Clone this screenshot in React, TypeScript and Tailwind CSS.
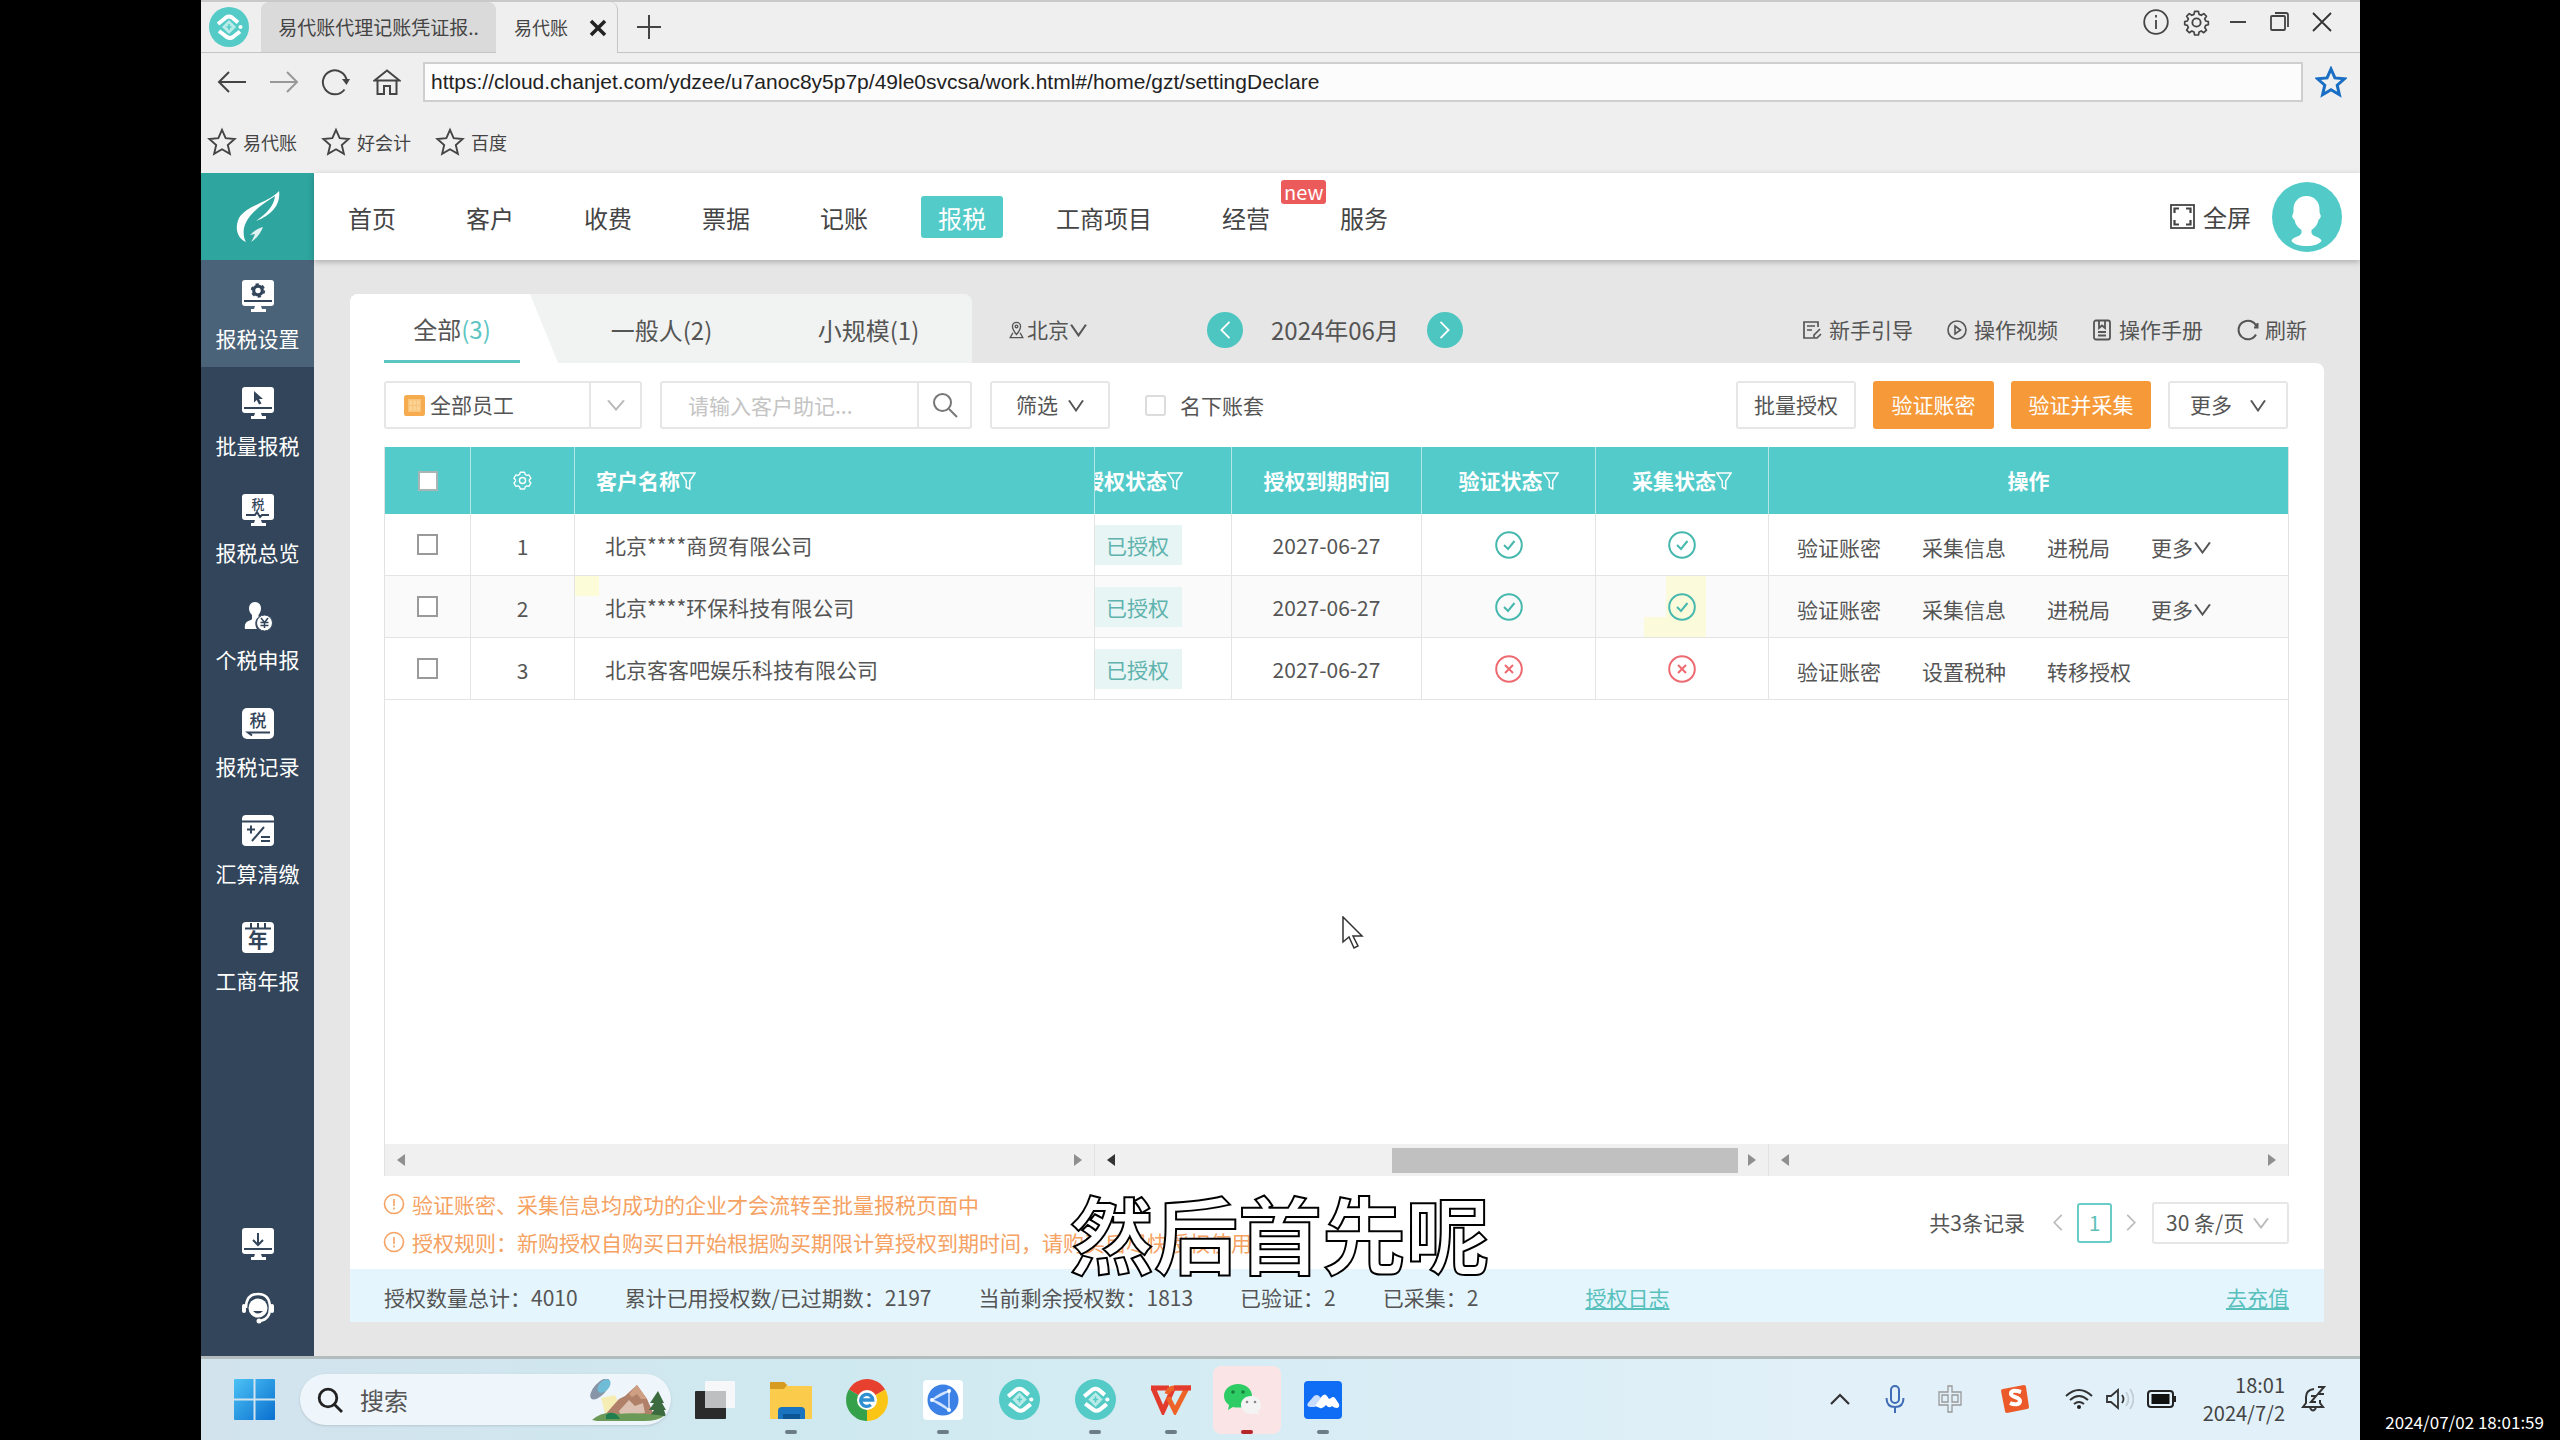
import React from "react";

type P = { className?: string };

const Chevron = ({ className = "" }: P) => (
  <svg viewBox="0 0 16 18" className={className} fill="none" stroke="currentColor" strokeWidth="2" preserveAspectRatio="none">
    <path d="M1 2l7 14 7-14" />
  </svg>
);
const Funnel = () => (
  <svg viewBox="0 0 18 22" className="h-5 w-4" fill="none" stroke="#fff" strokeWidth="1.6">
    <path d="M1 2h16l-6 9v9l-4-2v-7z" />
  </svg>
);
const Star = ({ className = "", w = 2 }: P & { w?: number }) => (
  <svg viewBox="0 0 32 32" className={className} fill="none" stroke="currentColor" strokeWidth={w}>
    <path d="M16 3l3.9 8.9 9.6.9-7.3 6.4 2.2 9.500L16 23.700l-8.400 5 2.200-9.500-7.300-6.400 9.600-.9z" />
  </svg>
);
const Gear = ({ className = "" }: P) => (
  <svg viewBox="0 0 26 26" className={className} fill="none" stroke="currentColor" strokeWidth="1.800" strokeLinejoin="round">
    <path d="M11 1.500h4l.7 3.200 2.300 1 2.700-1.800 2.800 2.800-1.800 2.700 1 2.300 2.800.6v3.400l-2.800.7-1 2.200 1.800 2.800-2.800 2.700-2.700-1.800-2.300 1-.7 3.200h-4l-.7-3.200-2.300-1-2.700 1.800-2.800-2.700 1.800-2.800-1-2.200L.5 15.700v-3.400l2.800-.6 1-2.300-1.800-2.700 2.800-2.800L8 5.700l2.300-1z" transform="translate(1.200 .9) scale(.91)" />
    <circle cx="13" cy="13" r="4" />
  </svg>
);
const HexGear = ({ className = "" }: P) => (
  <svg viewBox="0 0 22 22" className={className} fill="none" stroke="currentColor" strokeWidth="1.500" strokeLinejoin="round">
    <path d="M8.500 1.500h5l.8 2.600 1.700 1 2.600-.6 2.300 4-1.900 2v1.500l1.900 2-2.300 4-2.600-.6-1.700 1-.8 2.600h-5l-.8-2.600-1.700-1-2.600.6-2.300-4 1.900-2v-1.500l-1.900-2 2.300-4 2.600.6 1.700-1z" transform="translate(1 1) scale(.9)" />
    <circle cx="11" cy="11" r="3.200" />
  </svg>
);
const BrandDisc = ({ className = "" }: P) => (
  <svg viewBox="0 0 40 40" className={className}>
    <circle cx="20" cy="20" r="20" fill="#54cbc6" />
    <g fill="none" stroke="#fff" strokeWidth="4">
      <path d="M9 17l8-6.500q3-2 6 0l6 5" />
      <path d="M10 24l8 6q3 2 6 0l7-5.500" />
    </g>
    <path d="M20 13l7 7-7 7-7-7z" fill="#b9ece9" />
    <path d="M20 17v6M17.500 20h5" stroke="#54cbc6" strokeWidth="1.500" />
    <circle cx="31.500" cy="20" r="2" fill="#fff" />
  </svg>
);

const Monitor = ({ children }: { children?: React.ReactNode }) => (
  <svg viewBox="0 0 32 32" className="h-8 w-8">
    <rect x="0" y="0" width="32" height="26" rx="3" fill="#fff" />
    <path d="M13 26h6l1 3h4v3H9v-3h3z" fill="#fff" />
    {children}
  </svg>
);
const D = "#33455a";
const sideItems: { label: string; icon: React.ReactNode }[] = [
  {
    label: "报税设置",
    icon: (
      <Monitor>
        <path d="M2 21h28" stroke={D} strokeWidth="2" />
        <circle cx="16" cy="10.500" r="4.300" fill="none" stroke={D} strokeWidth="3.200" />
        <circle cx="16" cy="10.500" r="6.300" fill="none" stroke={D} strokeWidth="1.800" strokeDasharray="3.300 3.300" />
      </Monitor>
    ),
  },
  {
    label: "批量报税",
    icon: (
      <Monitor>
        <path d="M2 21h28" stroke={D} strokeWidth="2" />
        <path d="M12 4l9 8h-4l2.500 4.500-2.500 1-2.200-4.500-2.800 2.500z" fill={D} />
      </Monitor>
    ),
  },
  {
    label: "报税总览",
    icon: (
      <Monitor>
        <text x="16" y="15" fontSize="13" fontWeight="500" textAnchor="middle" fill={D}>税</text>
        <path d="M4 21h9l2-3 3 5 2-2h7" stroke={D} strokeWidth="2" fill="none" />
      </Monitor>
    ),
  },
  {
    label: "个税申报",
    icon: (
      <svg viewBox="0 0 32 32" className="h-8 w-8">
        <path d="M13 1c4 0 6 3 6 6.500 0 3-1.500 5-2.500 6.500v2c-4 3-4 8-1.500 12H3c-1-5 1-8 6-9l1-1v-4C8 12 7 10 7 7.500 7 4 9 1 13 1z" fill="#fff" />
        <circle cx="22.500" cy="22" r="8" fill="#fff" stroke={D} strokeWidth="1" />
        <path d="M19 17l3.500 4.500L26 17M22.500 21v6M18.500 21.500h8M18.500 24.500h8" stroke={D} strokeWidth="1.500" fill="none" />
      </svg>
    ),
  },
  {
    label: "报税记录",
    icon: (
      <svg viewBox="0 0 32 32" className="h-8 w-8">
        <rect width="32" height="31" rx="5" fill="#fff" />
        <text x="16" y="19" fontSize="17" fontWeight="500" textAnchor="middle" fill={D}>税</text>
        <path d="M28 24.500H6l4 3" stroke={D} strokeWidth="2" fill="none" />
      </svg>
    ),
  },
  {
    label: "汇算清缴",
    icon: (
      <svg viewBox="0 0 32 32" className="h-8 w-8">
        <rect width="32" height="31" rx="4" fill="#fff" />
        <path d="M0 6.500h32M5 14.500h8M9 10.500v8M10 26L22 12M19 22h9M19 26h9" stroke={D} strokeWidth="2" fill="none" />
      </svg>
    ),
  },
  {
    label: "工商年报",
    icon: (
      <svg viewBox="0 0 32 32" className="h-8 w-8">
        <rect width="32" height="31" rx="4" fill="#fff" />
        <path d="M3 6.500h26M9 1v5M16 1v5M23 1v5" stroke={D} strokeWidth="2" />
        <text x="16" y="26" fontSize="20" fontWeight="700" textAnchor="middle" fill={D}>年</text>
      </svg>
    ),
  },
];

const navItems = ["首页", "客户", "收费", "票据", "记账", "报税", "工商项目", "经营", "服务"];

const rows = [
  { name: "北京****商贸有限公司", ok: true, ops: ["验证账密", "采集信息", "进税局"], more: true },
  { name: "北京****环保科技有限公司", ok: true, ops: ["验证账密", "采集信息", "进税局"], more: true },
  { name: "北京客客吧娱乐科技有限公司", ok: false, ops: ["验证账密", "设置税种", "转移授权"], more: false },
];

const Status = ({ ok }: { ok: boolean }) => (
  <svg viewBox="0 0 28 28" className="relative mx-auto block h-7 w-7" fill="none" strokeWidth="2" stroke={ok ? "#46b8ad" : "#ee6a70"}>
    <circle cx="14" cy="14" r="12.800" />
    {ok ? <path d="M9 14l4 4 6.500-8" /> : <path d="M10 10l8 8M18 10l-8 8" />}
  </svg>
);
const Arrow = ({ left, dark }: { left?: boolean; dark?: boolean }) => (
  <svg viewBox="0 0 8 12" className="h-3 w-2">
    <path d={left ? "M8 0v12L0 6z" : "M0 0v12l8-6z"} fill={dark ? "#333" : "#8f8f8f"} />
  </svg>
);
const Notice = ({ children }: { children: React.ReactNode }) => (
  <p className="flex items-center gap-[7px] whitespace-nowrap leading-[38px] text-[#f5a263]">
    <svg viewBox="0 0 22 22" className="h-[22px] w-[22px]" fill="none" stroke="currentColor" strokeWidth="1.600">
      <circle cx="11" cy="11" r="9.500" />
      <path d="M11 6v7M11 14.500v2" />
    </svg>
    {children}
  </p>
);
const box = "flex h-12 items-center justify-center rounded-[3px] whitespace-nowrap";
const check = "block appearance-none bg-white";

function TaskSlot({ children, dot, active }: { children: React.ReactNode; dot?: boolean; active?: boolean }) {
  return (
    <button className={"relative flex h-[68px] w-[68px] items-center justify-center rounded-lg " + (active ? "bg-[#fbe4e6]" : "")}>
      {children}
      {dot && <span className={"absolute bottom-0 left-7 h-1 w-3 rounded-full " + (active ? "bg-[#b5262b]" : "bg-[#6c7d87]")} />}
    </button>
  );
}

function Browser() {
  return (
    <header className="bg-[#efefef] text-[#444]">
      <div className="flex h-[53px] items-stretch border-t-2 border-[#c9c9c9]">
        <div className="flex w-[60px] items-center border-b border-[#c4c4c4] pl-2">
          <BrandDisc className="h-10 w-10" />
        </div>
        <button className="w-[235px] rounded-t-lg border-b border-[#c4c4c4] bg-[#dadada] text-center text-[19px] whitespace-nowrap">易代账代理记账凭证报..</button>
        <div className="flex w-[122px] items-center justify-between rounded-t-lg border-r border-[#c4c4c4] pr-[10px] pl-[18px] text-[18px]">
          <button>易代账</button>
          <button aria-label="关闭标签">
            <svg viewBox="0 0 18 18" className="h-[18px] w-[18px]" stroke="#222" strokeWidth="3.500"><path d="M2 2l14 14M16 2L2 16" /></svg>
          </button>
        </div>
        <div className="flex flex-1 items-center justify-between border-b border-[#c4c4c4] pr-7 pl-[18px]">
          <button aria-label="新标签">
            <svg viewBox="0 0 26 26" className="h-[26px] w-[26px]" stroke="#444" strokeWidth="2"><path d="M13 1v24M1 13h24" /></svg>
          </button>
          <div className="flex items-center pb-[10px]">
            <button aria-label="信息" className="mr-[14px]">
              <svg viewBox="0 0 26 26" className="h-[26px] w-[26px]" fill="none" stroke="#444" strokeWidth="1.800"><circle cx="13" cy="13" r="11.800" /><path d="M13 11v9M13 6v2.500" /></svg>
            </button>
            <button aria-label="设置" className="mr-5"><Gear className="h-[27px] w-[27px]" /></button>
            <button aria-label="最小化" className="mr-6"><span className="block h-[2px] w-4 bg-[#444]" /></button>
            <button aria-label="还原" className="mr-[22px]">
              <svg viewBox="0 0 20 20" className="h-5 w-5" fill="none" stroke="#444" strokeWidth="1.800"><rect x="1" y="4" width="14" height="14" rx="1" /><path d="M5 1h11q2 0 2 2v12" /></svg>
            </button>
            <button aria-label="关闭">
              <svg viewBox="0 0 20 20" className="h-5 w-5" stroke="#333" strokeWidth="1.800"><path d="M1 1l18 18M19 1L1 19" /></svg>
            </button>
          </div>
        </div>
      </div>
      <div className="flex h-[58px] items-center pr-[13px] pl-4">
        <button aria-label="后退" className="mr-[22px]">
          <svg viewBox="0 0 30 22" className="h-[22px] w-[30px]" fill="none" stroke="#444" strokeWidth="2"><path d="M29 11H2M12 1L2 11l10 10" /></svg>
        </button>
        <button aria-label="前进" className="mr-[22px]">
          <svg viewBox="0 0 30 22" className="h-[22px] w-[30px]" fill="none" stroke="#999" strokeWidth="2"><path d="M1 11h27M18 1l10 10-10 10" /></svg>
        </button>
        <button aria-label="重新加载" className="mr-[22px]">
          <svg viewBox="0 0 30 28" className="h-[28px] w-[30px]" fill="none" stroke="#444" strokeWidth="2"><path d="M23.500 21.500A12 12 0 1 1 25.800 13" /><path d="M21 11h8l-3.500 6z" fill="#444" stroke="none" /></svg>
        </button>
        <button aria-label="主页" className="mr-[22px]">
          <svg viewBox="0 0 28 28" className="h-7 w-7" fill="none" stroke="#444" strokeWidth="2"><path d="M1.500 12.500L14 2.500l12.500 10zM4.500 13v13h6.500v-8h6v8h6.500V13" /></svg>
        </button>
        <input aria-label="地址" className="h-10 min-w-0 flex-1 border-2 border-[#cfcfcf] bg-[#fcfcfc] pl-[6px] font-['Liberation_Sans',sans-serif] text-[21px] text-[#222] outline-none" defaultValue="https://cloud.chanjet.com/ydzee/u7anoc8y5p7p/49le0svcsa/work.html#/home/gzt/settingDeclare" />
        <button aria-label="收藏" className="ml-3"><Star className="h-8 w-8 text-[#1a6fc4]" w={3} /></button>
      </div>
      <nav className="flex h-[62px] items-center gap-6 pl-[6px] text-[18px]">
        {["易代账", "好会计", "百度"].map((t) => (
          <a key={t} href="#" className="flex items-center gap-[6px]"><Star className="h-[30px] w-[30px]" />{t}</a>
        ))}
      </nav>
    </header>
  );
}

function Sidebar() {
  return (
    <aside className="flex w-[113px] shrink-0 flex-col bg-[#32455a] text-[21px] text-white">
      <div className="flex h-[87px] items-center justify-center bg-[#2ea59f]">
        <svg viewBox="0 0 46 52" className="h-[52px] w-[46px]" fill="#fff">
          <path d="M44 0C46 12 38 24 21 30c10-7 18-15 19-25C28 13 13 22 9 37c-1 6 0 11 2 14C3 48-1 38 4 27 12 14 33 12 44 0z" />
          <path d="M28 36c-2 6-7 12-12 15 2-3 3-6 4-8l-5 1c4-4 8-7 13-8z" opacity=".85" />
        </svg>
      </div>
      {sideItems.map((s, i) => (
        <a key={s.label} href="#" className={"flex h-[107px] flex-col items-center pt-5 leading-7 " + (i === 0 ? "bg-[#4b6379]" : "")}>
          {s.icon}
          <span className="mt-3">{s.label}</span>
        </a>
      ))}
      <div className="mt-auto flex flex-col items-center gap-8 pb-8">
        <button aria-label="下载">
          <Monitor><path d="M2 21h28M16 5v11M11 12l5 5 5-5" stroke={D} strokeWidth="2" fill="none" /></Monitor>
        </button>
        <button aria-label="客服">
          <svg viewBox="0 0 32 32" className="h-8 w-8" fill="none">
            <path d="M4 16C4 6 9 2 16 2s12 4 12 14c0 8-4 12-10 13" stroke="#fff" strokeWidth="2.500" />
            <circle cx="16" cy="16" r="9.500" fill="#fff" />
            <rect x="0" y="12" width="4" height="9" rx="2" fill="#fff" /><rect x="28" y="12" width="4" height="9" rx="2" fill="#fff" />
            <path d="M11 19q5 5 10 0z" fill={D} /><circle cx="17" cy="29" r="2.500" fill="#fff" />
          </svg>
        </button>
      </div>
    </aside>
  );
}

function TopNav() {
  return (
    <div className="z-10 flex h-[87px] items-center bg-white pr-[18px] pl-[17px] text-[24px] text-[#444] shadow-[0_2px_6px_rgba(0,0,0,0.25)]">
      <nav className="flex gap-9">
        {navItems.map((t) => (
          <a key={t} href="#" className={"relative h-[42px] rounded-[3px] px-[17px] leading-[44px] whitespace-nowrap " + (t === "报税" ? "bg-[#53cbc8] text-white" : "")}>
            {t}
            {t === "经营" && <span className="absolute -top-4 left-[76px] h-6 rounded-[3px] bg-[#ec5b5b] px-[3px] text-[20px] leading-6 text-white">new</span>}
          </a>
        ))}
      </nav>
      <button className="ml-auto flex items-center gap-2">
        <svg viewBox="0 0 25 25" className="h-[25px] w-[25px]" fill="none" stroke="#444" strokeWidth="1.800">
          <rect x="1" y="1" width="23" height="23" />
          <path d="M4.500 9V4.500H9M16 4.500h4.500V9M20.500 16v4.500H16M9 20.500H4.500V16" strokeWidth="2.200" />
        </svg>
        全屏
      </button>
      <button aria-label="用户" className="ml-[21px]">
        <svg viewBox="0 0 70 70" className="h-[70px] w-[70px]">
          <circle cx="35" cy="35" r="35" fill="#52cbc8" />
          <path d="M34.500 14c8 0 13 6 13 13 0 3 0 4 1 6s-1 4-2 5c-1 5-4 8-7 10v3c1 4 10 4 10 8-2 3-8 5-15 5s-13-2-15-5c0-4 9-4 10-8v-3c-3-2-6-5-7-10-1-1-3-3-2-5s1-3 1-6c0-7 5-13 13-13z" fill="#fff" />
        </svg>
      </button>
    </div>
  );
}

const th = "border-r border-[#b5e6e4] p-0 font-bold";
const td = "border-r border-b border-[#e4e4e4] p-0";

export default function App() {
  return (
    <div className="relative flex min-h-screen bg-black font-['Noto_Sans_CJK_SC',sans-serif] text-[21px] text-[#555]">
      <div className="w-[201px] shrink-0" />
      <div className="flex min-w-0 flex-1 flex-col bg-[#e6e6e6]">
        <Browser />
        <div className="flex flex-1">
          <Sidebar />
          <div className="flex min-w-0 flex-1 flex-col">
            <TopNav />
            <main className="flex flex-1 flex-col pt-[34px] pr-9 pb-[34px] pl-9">
              <div className="flex h-[69px] items-stretch text-[#555]">
                <div className="flex w-[622px] rounded-t-lg bg-[#f1f3f2] text-[24px]">
                  <button className="w-[208px] rounded-tl-lg bg-white pl-[34px] [clip-path:polygon(0_0,180px_0,208px_100%,0_100%)]">
                    <span className="block h-[69px] w-[136px] border-b-[3px] border-[#5cc5c2] pt-[2px] leading-[66px]">全部<span className="text-[#5cc5c2]">(3)</span></span>
                  </button>
                  <button className="flex-1 pt-[2px]">一般人(2)</button>
                  <button className="flex-1 pt-[2px]">小规模(1)</button>
                </div>
                <div className="flex flex-1 items-center pt-[2px] pr-[17px] pl-9">
                  <button className="flex items-center">
                    <svg viewBox="0 0 18 20" className="mr-[2px] h-[18px] w-[17px]" fill="none" stroke="#555" strokeWidth="1.500"><path d="M9 15C5 10 4.500 8 4.500 6a4.500 4.500 0 0 1 9 0c0 2-.5 4-4.500 9zM5 13l-3 5.500h14L13 13" /><circle cx="9" cy="6" r="1.500" /></svg>
                    北京<Chevron className="ml-px h-[14px] w-[17px]" />
                  </button>
                  <div className="ml-[120px] flex items-center gap-7 text-[24px]">
                    <button aria-label="上个月" className="flex h-9 w-9 items-center justify-center rounded-full bg-[#4dc5c0]">
                      <svg viewBox="0 0 12 20" className="h-[18px] w-3" fill="none" stroke="#fff" strokeWidth="2"><path d="M11 1L2 10l9 9" /></svg>
                    </button>
                    2024年06月
                    <button aria-label="下个月" className="flex h-9 w-9 items-center justify-center rounded-full bg-[#4dc5c0]">
                      <svg viewBox="0 0 12 20" className="h-[18px] w-3" fill="none" stroke="#fff" strokeWidth="2"><path d="M1 1l9 9-9 9" /></svg>
                    </button>
                  </div>
                  <div className="ml-auto flex items-center gap-[34px] whitespace-nowrap">
                    <a href="#" className="flex items-center gap-[7px]">
                      <svg viewBox="0 0 20 20" className="h-5 w-5" fill="none" stroke="#555" strokeWidth="1.700"><path d="M16 7V2H2v16h9M5 6h8M5 10h5M18 9l-6 6v3h3l4-4" /></svg>新手引导
                    </a>
                    <a href="#" className="flex items-center gap-[7px]">
                      <svg viewBox="0 0 20 20" className="h-5 w-5" fill="none" stroke="#555" strokeWidth="1.600"><circle cx="10" cy="10" r="9" /><path d="M8 6l5.500 4L8 14z" /></svg>操作视频
                    </a>
                    <a href="#" className="flex items-center gap-[7px]">
                      <svg viewBox="0 0 20 22" className="h-[22px] w-5" fill="none" stroke="#555" strokeWidth="1.800"><rect x="2" y="1.500" width="16" height="19" rx="2" /><path d="M7 2v7l3-2.500L13 9V2M6 13h8M6 16.500h8" /></svg>操作手册
                    </a>
                    <button className="flex items-center gap-[6px]">
                      <svg viewBox="0 0 22 22" className="h-[22px] w-[22px]" fill="none" stroke="#555" strokeWidth="2"><path d="M19 15.500A9.300 9.300 0 1 1 19.500 7.500M20.500 4v4.500H17" /></svg>刷新
                    </button>
                  </div>
                </div>
              </div>

              <section className="flex flex-1 flex-col rounded-tr-lg bg-white">
                <div className="flex items-center px-[34px] pt-[18px] pb-[18px]">
                  <label className="flex h-12 w-[258px] items-center rounded-[3px] border-2 border-[#e6e6e6] pl-[18px]">
                    <svg viewBox="0 0 22 22" className="mr-[5px] h-[21px] w-[21px] shrink-0"><rect width="22" height="22" rx="3" fill="#f5ab4e" /><path d="M5 5h12v12H5zM9 5v12M13 5v12M5 11h12" fill="#fbd597" stroke="#f9c47b" strokeWidth="1.500" /></svg>
                    <select aria-label="员工" className="min-w-0 flex-1 appearance-none bg-transparent outline-none"><option>全部员工</option></select>
                    <span className="flex h-full w-[51px] items-center justify-center border-l-2 border-[#e6e6e6]"><Chevron className="h-3 w-[18px] text-[#bbb]" /></span>
                  </label>
                  <div className="ml-[18px] flex h-12 w-[312px] items-center rounded-[3px] border-2 border-[#e6e6e6]">
                    <input aria-label="客户助记" placeholder="请输入客户助记..." className="h-full min-w-0 flex-1 pl-[26px] outline-none placeholder:text-[#c4c4c4]" />
                    <button aria-label="搜索" className="flex h-full w-[53px] items-center justify-center border-l-2 border-[#e6e6e6]">
                      <svg viewBox="0 0 26 26" className="h-[26px] w-[26px]" fill="none" stroke="#777" strokeWidth="2"><circle cx="10.500" cy="10.500" r="8.500" /><path d="M17 17l8 8" /></svg>
                    </button>
                  </div>
                  <button className={box + " ml-[18px] w-[120px] gap-[10px] border-2 border-[#e6e6e6]"}>筛选<Chevron className="h-[13px] w-4" /></button>
                  <label className="ml-[35px] flex items-center gap-[14px] pt-px whitespace-nowrap">
                    <input type="checkbox" className={check + " h-[21px] w-[21px] rounded-[3px] border-2 border-[#dcdcdc]"} />名下账套
                  </label>
                  <div className="ml-auto flex gap-[17px] pr-[2px]">
                    <button className={box + " w-[120px] border-2 border-[#e6e6e6]"}>批量授权</button>
                    <button className={box + " w-[121px] bg-[#f69939] text-white"}>验证账密</button>
                    <button className={box + " w-[140px] bg-[#f69939] text-white"}>验证并采集</button>
                    <button className={box + " w-[120px] gap-[18px] border-2 border-[#e6e6e6]"}>更多<Chevron className="h-[13px] w-4" /></button>
                  </div>
                </div>

                <div className="mr-[35px] ml-[34px] flex flex-1 flex-col border-x border-[#e2e2e2]">
                  <table className="w-full table-fixed border-separate border-spacing-0">
                    <colgroup>
                      <col className="w-[86px]" /><col className="w-[104px]" /><col /><col className="w-[137px]" /><col className="w-[190px]" /><col className="w-[174px]" /><col className="w-[173px]" /><col className="w-[519px]" />
                    </colgroup>
                    <thead>
                      <tr className="h-[67px] bg-[#52cbca] text-white">
                        <th className={th}><input type="checkbox" aria-label="全选" className={check + " mx-auto h-5 w-5 border-2 border-[#a9b5b5]"} /></th>
                        <th className={th}><HexGear className="mx-auto h-[21px] w-[21px]" /></th>
                        <th className={th + " pl-[21px]"}><span className="flex items-center">客户名称<Funnel /></span></th>
                        <th className={th + " overflow-hidden"}><span className="-ml-3 flex items-center whitespace-nowrap">授权状态<Funnel /></span></th>
                        <th className={th}>授权到期时间</th>
                        <th className={th}><span className="flex items-center justify-center">验证状态<Funnel /></span></th>
                        <th className={th}><span className="flex items-center justify-center">采集状态<Funnel /></span></th>
                        <th className="p-0 font-bold">操作</th>
                      </tr>
                    </thead>
                    <tbody className="text-center">
                      {rows.map((r, i) => (
                        <tr key={r.name} className={"h-[62px] " + (i === 1 ? "bg-[#fafafa]" : "bg-white")}>
                          <td className={td}><input type="checkbox" aria-label={r.name} className={check + " mx-auto h-[21px] w-[21px] border-2 border-[#9a9a9a]"} /></td>
                          <td className={td + " pt-1"}>{i + 1}</td>
                          <td className={td + " relative pt-[2px] pl-[30px] text-left"}>
                            {i === 1 && <span className="absolute top-0 left-0 h-5 w-6 bg-[#fdfcd9]" />}
                            {r.name}
                          </td>
                          <td className={td + " text-left"}><span className="block h-10 w-[87px] bg-[#e7f5f4] pl-[11px] leading-10 text-[#5fb3ae]">已授权</span></td>
                          <td className={td + " pt-[2px]"}>2027-06-27</td>
                          <td className={td}><Status ok={r.ok} /></td>
                          <td className={td + " relative"}>
                            {i === 1 && (
                              <>
                                <span className="absolute top-0 left-[70px] h-[61px] w-10 bg-[#fbfbdc]" />
                                <span className="absolute bottom-0 left-12 h-5 w-6 bg-[#fbfbdc]" />
                              </>
                            )}
                            <Status ok={r.ok} />
                          </td>
                          <td className="border-b border-[#e4e4e4] p-0">
                            <div className="flex gap-[41px] pt-[6px] pl-7">
                              {r.ops.map((o) => <a key={o} href="#">{o}</a>)}
                              {r.more && <button className="flex items-center">更多<Chevron className="ml-px h-[13px] w-[17px]" /></button>}
                            </div>
                          </td>
                        </tr>
                      ))}
                    </tbody>
                  </table>
                  <div className="mt-auto flex h-8 bg-[#f0f0f0]">
                    <div className="flex flex-1 items-center justify-between border-r border-[#e2e2e2] px-3"><Arrow left /><Arrow /></div>
                    <div className="flex w-[674px] items-center border-r border-[#e2e2e2] px-3"><Arrow left dark /><span className="ml-auto h-[25px] w-[346px] bg-[#c0c0c0]" /><span className="ml-[10px] flex"><Arrow /></span></div>
                    <div className="flex w-[519px] items-center justify-between px-3"><Arrow left /><Arrow /></div>
                  </div>
                </div>

                <div className="flex h-[93px] items-center justify-between pr-[35px] pl-[33px]">
                  <div>
                    <Notice>验证账密、采集信息均成功的企业才会流转至批量报税页面中</Notice>
                    <Notice>授权规则：新购授权自购买日开始根据购买期限计算授权到期时间，请购买后尽快授权使用!</Notice>
                  </div>
                  <div className="flex items-center whitespace-nowrap">
                    共3条记录
                    <button aria-label="上一页" className="ml-7"><svg viewBox="0 0 10 18" className="h-[17px] w-[10px]" fill="none" stroke="#bbb" strokeWidth="1.800"><path d="M9 1L1 9l8 8" /></svg></button>
                    <button className="mx-[14px] h-10 w-[35px] rounded-[3px] border-2 border-[#6accc6] text-[#5fbfba]">1</button>
                    <button aria-label="下一页"><svg viewBox="0 0 10 18" className="h-[17px] w-[10px]" fill="none" stroke="#bbb" strokeWidth="1.800"><path d="M1 1l8 8-8 8" /></svg></button>
                    <label className="ml-4 flex h-[42px] w-[137px] items-center rounded-[3px] border-2 border-[#e6e6e6] pr-[18px] pl-3">
                      <select aria-label="每页条数" className="min-w-0 flex-1 appearance-none bg-transparent outline-none"><option>30 条/页</option></select>
                      <Chevron className="h-3 w-4 text-[#bbb]" />
                    </label>
                  </div>
                </div>
                <div className="flex h-[53px] items-center gap-[47px] bg-[#e4f5fd] pt-1 pr-[35px] pl-[34px] whitespace-nowrap">
                  <span>授权数量总计：4010</span>
                  <span>累计已用授权数/已过期数：2197</span>
                  <span>当前剩余授权数：1813</span>
                  <span>已验证：2</span>
                  <span>已采集：2</span>
                  <a href="#" className="ml-[60px] text-[#58c0bc] underline">授权日志</a>
                  <a href="#" className="ml-auto text-[#58c0bc] underline">去充值</a>
                </div>
              </section>
            </main>
          </div>
        </div>

        <footer className="flex h-[84px] items-center border-t-[3px] border-[#b3bcbd] bg-linear-to-r from-[#d2e3ee] via-[#cfe9f0] via-30% to-[#e1f0f9] to-75% pl-[33px]">
          <button aria-label="开始" className="mr-[25px]">
            <svg viewBox="0 0 41 41" className="h-[41px] w-[41px]">
              <defs><linearGradient id="win" x1="0" y1="0" x2="1" y2="1"><stop offset="0" stopColor="#4cc2f5" /><stop offset="1" stopColor="#0a6fcf" /></linearGradient></defs>
              <path d="M1 0h18.500v19.500H0V1q0-1 1-1zM21.500 0H40q1 0 1 1v18.500H21.500zM0 21.500h19.500V41H1q-1 0-1-1zM21.500 21.500H41V40q0 1-1 1H21.500z" fill="url(#win)" />
            </svg>
          </button>
          <label className="mr-[10px] flex h-[51px] w-[371px] items-center overflow-hidden rounded-full bg-[#eff6fb] pl-[17px] shadow-sm">
            <svg viewBox="0 0 26 26" className="mr-[17px] h-[26px] w-[26px] shrink-0" fill="none" stroke="#222" strokeWidth="2.800"><circle cx="11" cy="11" r="8.800" /><path d="M17.500 17.500L25 25" /></svg>
            <input aria-label="搜索" placeholder="搜索" className="min-w-0 flex-1 bg-transparent text-[24px] outline-none placeholder:text-[#555]" />
            <svg viewBox="0 0 78 42" className="mr-1 h-[42px] w-[78px] shrink-0">
              <path d="M12 19l14-3 8 18H16z" fill="#f6edb4" />
              <ellipse cx="11" cy="10" rx="13" ry="6" transform="rotate(-48 11 10)" fill="#8894a8" />
              <ellipse cx="15" cy="7" rx="8" ry="5" transform="rotate(-48 15 7)" fill="#6fbcd6" />
              <path d="M14 38L30 20l6-3 12-11 10 14 8 18z" fill="#b08069" />
              <path d="M48 6l-8 9 3 3 5-3 4 5 6 0z" fill="#cf9f84" />
              <path d="M30 32l10-11 6 6 8-3 2 10-24 3z" fill="#dcc0b1" />
              <path d="M69 12l-8 12h4l-5 7h5l-4 6h16l-2-6h2l-4-7h2z" fill="#3c6b3f" />
              <path d="M3 41q12-10 26-6 20-2 46 2-6 5-20 5H8z" fill="#6b9a58" />
              <path d="M17 36q8-6 14 4H17z" fill="#1f7d4e" />
            </svg>
          </label>
          <div className="flex gap-2">
            <TaskSlot>
              <svg viewBox="0 0 42 40" className="h-10 w-[42px]"><rect x="1" y="11" width="31" height="28" rx="1" fill="#2b2b2b" /><rect x="11" y="1" width="30" height="27" rx="1" fill="#f5f7f8" /><path d="M11 11h21v17H11z" fill="#bdbfc0" /></svg>
            </TaskSlot>
            <TaskSlot dot>
              <svg viewBox="0 0 44 40" className="h-10 w-11"><path d="M1 3q0-1 1-1h13l4 4h23q1 0 1 1v31q0 1-1 1H2q-1 0-1-1z" fill="#fbcb4c" /><path d="M1 3q0-1 1-1h13l3 3-3 4H1z" fill="#d79b20" /><path d="M9 39V31q0-4 4-4h19q4 0 4 4v8z" fill="#1a73be" /><path d="M14 39v-5h17v5z" fill="#0e5596" /></svg>
            </TaskSlot>
            <TaskSlot>
              <svg viewBox="0 0 44 44" className="h-[42px] w-[42px]">
                <path d="M22 22L3 11a22 22 0 0 1 38 0z" fill="#e8402f" /><path d="M22 22V44A22 22 0 0 1 3 11z" fill="#35a24b" /><path d="M22 22l19-11a22 22 0 0 1-19 33z" fill="#fbc516" />
                <circle cx="22" cy="22" r="10.500" fill="#fff" /><path d="M16 22h12a6.300 6.300 0 1 0-2 5" fill="none" stroke="#2f8fd0" strokeWidth="3.500" />
              </svg>
            </TaskSlot>
            <TaskSlot dot>
              <svg viewBox="0 0 40 40" className="h-10 w-10"><rect width="40" height="40" rx="4" fill="#fdfeff" /><circle cx="20" cy="20" r="15.500" fill="#3c82e6" /><path d="M9 20l17-9v19zM9 20q10 3 17 10M26 11q-9 2-17 9" fill="none" stroke="#cfe2ff" strokeWidth="1.600" /><circle cx="9" cy="20" r="2" fill="#fff" /><circle cx="26" cy="11" r="2" fill="#fff" /><circle cx="26" cy="30" r="2" fill="#fff" /></svg>
            </TaskSlot>
            <TaskSlot><BrandDisc className="h-[41px] w-[41px]" /></TaskSlot>
            <TaskSlot dot><BrandDisc className="h-[41px] w-[41px]" /></TaskSlot>
            <TaskSlot dot>
              <svg viewBox="0 0 42 30" className="h-[30px] w-[42px]" fill="none" strokeWidth="5"><path d="M1 3h18M3 3l10 23L23 4" stroke="#e23a2c" /><path d="M18 12l7 14L37 3H24q-5 0-7 6" stroke="#ee6428" /><path d="M24 3h17" stroke="#e23a2c" /></svg>
            </TaskSlot>
            <TaskSlot dot active>
              <svg viewBox="0 0 40 34" className="mr-2 h-[34px] w-10"><path d="M15 1C7 1 1 6 1 13c0 4 2 7 5 9l-1 5 5-3c8 2 19-1 19-11C29 6 23 1 15 1z" fill="#2ecc64" /><circle cx="10" cy="9" r="1.800" fill="#17803b" /><circle cx="20" cy="9" r="1.800" fill="#17803b" /><path d="M28 13c-6 0-10 4-10 9s5 9 10 9c2 0 3 0 4-1l4 2-1-4c2-1 3-4 3-6 0-5-4-9-10-9z" fill="#f4f4f4" /><circle cx="24" cy="19" r="1.300" fill="#888" /><circle cx="32" cy="19" r="1.300" fill="#888" /></svg>
            </TaskSlot>
            <TaskSlot dot>
              <svg viewBox="0 0 38 38" className="h-[38px] w-[38px]"><rect width="38" height="38" rx="4" fill="#0f6df5" /><path d="M4 22l6-7q3-2 5 0l2 2-6 9H6q-4-1-2-4z" fill="#c8ddff" /><path d="M11 25l7-10q3-3 5 0l2 3 2-1q2-2 4 0l4 6q1 3-2 4-3 0-5-2-3 3-6-1-3 4-6 3z" fill="#fff" /></svg>
            </TaskSlot>
          </div>
          <div className="ml-auto flex items-center pr-[34px] pb-[2px] text-[20px] leading-7 text-[#444]">
            <svg viewBox="0 0 20 12" className="mr-[35px] h-3 w-5" fill="none" stroke="#333" strokeWidth="2.200"><path d="M1 11l9-9 9 9" /></svg>
            <svg viewBox="0 0 20 28" className="mr-[33px] h-7 w-5" fill="none" stroke="#3f6cb5" strokeWidth="2"><rect x="6" y="1" width="8" height="17" rx="4" /><path d="M1.500 13q0 9 8.500 9t8.500-9M10 22v6" /></svg>
            <svg viewBox="0 0 24 28" className="mr-[39px] h-7 w-6" fill="none" stroke="#999" strokeWidth="1.300"><path d="M10 1h4v6h9v13h-9v7h-4v-7H1V7h9zM4 10v7h6v-7zM14 10v7h6v-7z" /></svg>
            <svg viewBox="0 0 28 28" className="mr-9 h-7 w-7"><path d="M2 4L23 0q2 0 2 2l3 20q0 2-2 2L6 28q-2 0-2-2L0 6q0-2 2-2z" fill="#ec5a29" /><path d="M20 7q-9-3-10 1c-1 5 9 3 9 8 0 4-6 4-10 2" stroke="#fff" strokeWidth="4" fill="none" /></svg>
            <svg viewBox="0 0 28 22" className="mr-[13px] h-[22px] w-7" fill="none" stroke="#333" strokeWidth="2"><path d="M1 8q13-12 26 0M5 12q9-8 18 0M9 16q5-4 10 0" /><circle cx="14" cy="19" r="2" fill="#222" stroke="none" /></svg>
            <svg viewBox="0 0 28 22" className="mr-[13px] h-[22px] w-7" fill="none" stroke="#333" strokeWidth="1.800"><path d="M1 8v6h4l7 6V2L5 8zM16 7q3 4 0 8" /><path d="M20 4q5 7 0 14M24 1q7 10 0 20" stroke="#c3ced5" /></svg>
            <svg viewBox="0 0 30 18" className="mr-[26px] h-[18px] w-[30px]"><rect x="1" y="1" width="25" height="16" rx="3" fill="none" stroke="#222" strokeWidth="2" /><rect x="4.500" y="4" width="18" height="10" fill="#111" /><path d="M27 6h2v6h-2z" fill="#222" /></svg>
            <time className="mr-4 text-right">18:01<br />2024/7/2</time>
            <svg viewBox="0 0 25 26" className="h-[26px] w-[25px]" fill="none" stroke="#333" strokeWidth="2"><path d="M13 3Q5 4 5 11v6l-3 4h20l-3-4v-3M9 22q3 5 6 0M10 10h5l-5 6h5M17 1h6l-6 7h6" /></svg>
          </div>
        </footer>
      </div>
      <aside className="flex w-[200px] shrink-0 items-end justify-end pr-4 pb-[6px] text-[17px] whitespace-nowrap text-white">2024/07/02 18:01:59</aside>

      <p className="pointer-events-none absolute inset-x-0 bottom-[158px] text-center text-[84px] leading-[100px] font-bold text-white [-webkit-text-stroke:2px_#000]">然后首先呢</p>
      <svg viewBox="0 0 22 34" className="absolute top-[916px] left-[1342px] h-[34px] w-[22px]"><path d="M1 1v25l6-5 5 11 4-2-5-10h9z" fill="#fff" stroke="#333" strokeWidth="1.500" /></svg>
    </div>
  );
}
